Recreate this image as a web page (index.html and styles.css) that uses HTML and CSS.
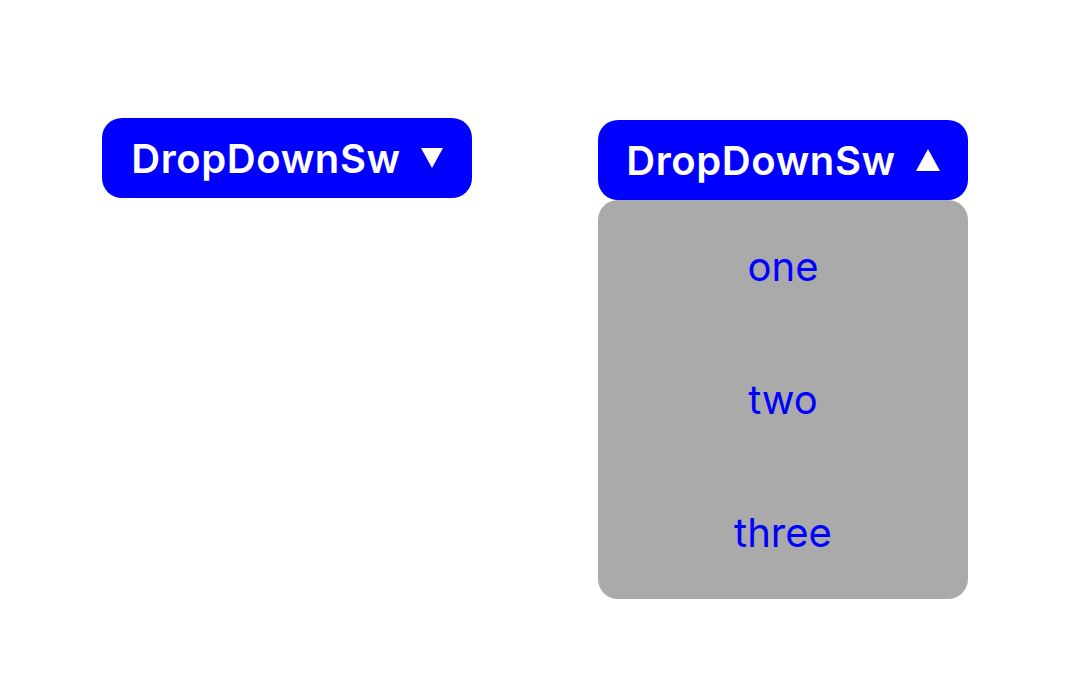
FILE: index.html
```html
<!DOCTYPE html>
<html lang="en">
<head>
    <meta charset="UTF-8">
    <meta name="viewport" content="width=device-width, initial-scale=1.0">
    <title>DropDown Switch</title>
    <link rel="stylesheet" href="styles.css">
</head>
<body>
    <div class="stage">
        <div class="dropdown">
            <button class="toggle">
                <span class="label">DropDownSw</span>
                <svg class="arrow" width="22" height="22" viewBox="0 0 22 22"><path d="M0 1 H22 L11 21 Z" fill="#fff"/></svg>
            </button>
        </div>

        <div class="dropdown open">
            <button class="toggle">
                <span class="label">DropDownSw</span>
                <svg class="arrow" width="24" height="24" viewBox="0 0 24 24"><path d="M12 1 L24 23 H0 Z" fill="#fff"/></svg>
            </button>
            <div class="menu">
                <div class="item">one</div>
                <div class="item">two</div>
                <div class="item">three</div>
            </div>
        </div>
    </div>
</body>
</html>
```

FILE: styles.css
```css
body {
    margin: 0;
    background: #fff;
    font-family: Inter, "Noto Sans", sans-serif;
}

.stage {
    display: flex;
    align-items: flex-start;
    gap: 126px;
    padding: 118px 0 0 102px;
}

.dropdown {
    width: 370px;
}

.dropdown.open {
    margin-top: 2px;
}

.toggle {
    display: flex;
    align-items: center;
    justify-content: center;
    gap: 20px;
    width: 100%;
    height: 80px;
    padding: 0;
    border: none;
    border-radius: 20px;
    background: #0000ff;
    color: #fff;
    font-family: inherit;
    font-size: 40px;
    font-weight: 600;
    cursor: pointer;
}

.toggle .label {
    letter-spacing: 0.6px;
}

.menu {
    background: #aaaaaa;
    border-radius: 20px;
}

.item {
    height: 133px;
    display: flex;
    align-items: center;
    justify-content: center;
    color: #0000ff;
    font-size: 40px;
}
```
